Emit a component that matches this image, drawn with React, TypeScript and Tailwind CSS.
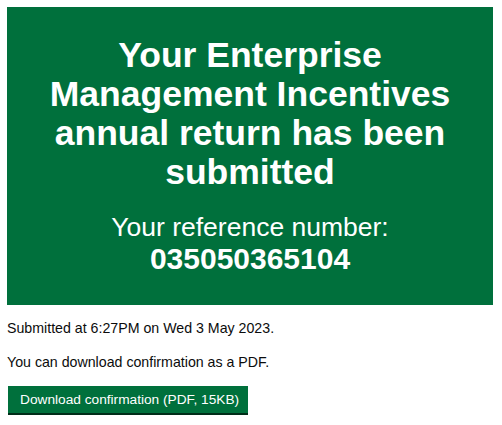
export default function App() {
  return (
    <div className="w-[502px] h-[425px] bg-white px-[7px] pt-[7px] font-['Liberation_Sans',Arial,sans-serif] text-[#0b0c0c]">
      <div className="w-[486px] h-[298px] bg-[#00703c] text-white text-center flex flex-col items-center pt-[29px]">
        <h1 className="text-[35.5px] leading-[39px] font-bold px-2">
          Your Enterprise Management Incentives annual return has been submitted
        </h1>
        <div className="mt-[19px] text-[26.5px] leading-[32px]">
          Your reference number:
          <br />
          <strong className="font-bold text-[30px]">035050365104</strong>
        </div>
      </div>
      <p className="mt-[13px] text-[14.2px] leading-[20px]">Submitted at 6:27PM on Wed 3 May 2023.</p>
      <p className="mt-[14px] text-[14.2px] leading-[20px]">You can download confirmation as a PDF.</p>
      <button className="mt-[14px] ml-px w-[240px] h-[27px] bg-[#00703c] text-white text-[13.7px] leading-[20px] whitespace-nowrap text-left pl-[12px] shadow-[0_2px_0_#002d18]">
        Download confirmation (PDF, 15KB)
      </button>
    </div>
  );
}
